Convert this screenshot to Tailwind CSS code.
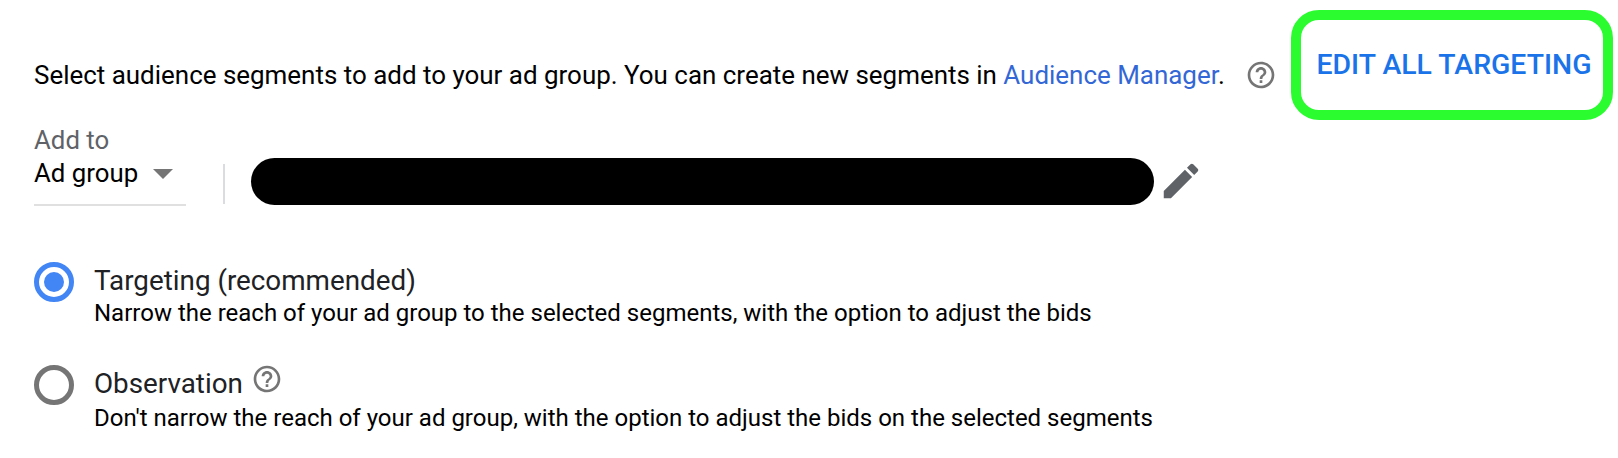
<!DOCTYPE html>
<html lang="en">
<head>
  <meta charset="UTF-8" />
  <title>Audience segments</title>
  <script src="https://cdn.jsdelivr.net/npm/@tailwindcss/browser@4"></script>
</head>
<body class="bg-white w-[1618px] h-[458px] overflow-hidden font-['Roboto',sans-serif] text-[#202124]">
  <div class="pl-[34px] pr-[5px] pt-[10px]">
    <!-- top row -->
    <div class="flex items-start justify-between">
      <div class="flex items-center pt-[20px] h-[110px]">
        <p class="text-[25.95px] leading-[34px] text-black whitespace-nowrap">Select audience segments to add to your ad group. You can create new segments in <a class="text-[#3367d6]">Audience Manager</a>.</p>
        <svg class="ml-[20px] w-[32px] h-[32px] fill-[#757575]" viewBox="0 0 24 24"><path d="M11 18h2v-2h-2v2zm1-16C6.48 2 2 6.48 2 12s4.48 10 10 10 10-4.48 10-10S17.52 2 12 2zm0 18c-4.41 0-8-3.59-8-8s3.59-8 8-8 8 3.59 8 8-3.59 8-8 8zm0-14c-2.21 0-4 1.79-4 4h2c0-1.1.9-2 2-2s2 .9 2 2c0 2-3 1.75-3 5h2c0-2.25 3-2.5 3-5 0-2.21-1.79-4-4-4z"/></svg>
      </div>
      <button class="w-[322px] h-[110px] border-[10px] border-[#2bfc30] rounded-[28px] text-[28.4px] font-medium text-[#1a73e8] pl-[4px] whitespace-nowrap">EDIT ALL TARGETING</button>
    </div>

    <!-- add to row -->
    <div class="flex items-end mt-[4px]">
      <div class="w-[152px] border-b-2 border-[#e0e0e0] h-[82px]">
        <div class="text-[25.8px] leading-[32px] text-[#5f6368]">Add to</div>
        <div class="flex items-center text-[25.8px] leading-[34px] text-black">
          Ad group
          <span class="ml-[15px] mt-[2px] w-0 h-0 border-x-[10px] border-x-transparent border-t-[10px] border-t-[#757575]"></span>
        </div>
      </div>
      <div class="ml-[37px] w-[2px] h-[40px] mb-[2px] bg-[#dadce0]"></div>
      <div class="ml-[26px] w-[903px] h-[47px] mb-[1px] rounded-full bg-black"></div>
      <svg class="ml-[4px] mb-[2px] w-[46px] h-[46px] fill-[#5f6368]" viewBox="0 0 24 24"><path d="M3 17.25V21h3.75L17.81 9.94l-3.75-3.75L3 17.25zM20.71 7.04a1 1 0 0 0 0-1.41l-2.34-2.34a1 1 0 0 0-1.41 0l-1.83 1.83 3.75 3.75 1.83-1.83z"/></svg>
    </div>

    <!-- options -->
    <div class="flex items-start mt-[56px]">
      <span class="w-[40px] h-[40px] rounded-full border-[5px] border-[#4285f4] flex items-center justify-center">
        <span class="w-[20px] h-[20px] rounded-full bg-[#4285f4]"></span>
      </span>
      <div class="ml-[20px] mt-[2px]">
        <div class="text-[27.8px] leading-[34px]">Targeting (recommended)</div>
        <div class="text-[24px] leading-[30px] text-black">Narrow the reach of your ad group to the selected segments, with the option to adjust the bids</div>
      </div>
    </div>
    <div class="flex items-start mt-[37px]">
      <span class="w-[40px] h-[40px] rounded-full border-[5px] border-[#757575]"></span>
      <div class="ml-[20px] mt-[1px]">
        <div class="flex items-start text-[27.8px] leading-[36px]">
          Observation
          <svg class="ml-[8px] mt-[-3px] w-[32px] h-[32px] fill-[#757575]" viewBox="0 0 24 24"><path d="M11 18h2v-2h-2v2zm1-16C6.48 2 2 6.48 2 12s4.48 10 10 10 10-4.48 10-10S17.52 2 12 2zm0 18c-4.41 0-8-3.59-8-8s3.59-8 8-8 8 3.59 8 8-3.59 8-8 8zm0-14c-2.21 0-4 1.79-4 4h2c0-1.1.9-2 2-2s2 .9 2 2c0 2-3 1.75-3 5h2c0-2.25 3-2.5 3-5 0-2.21-1.79-4-4-4z"/></svg>
        </div>
        <div class="text-[24px] leading-[30px] text-black mt-[1px]">Don't narrow the reach of your ad group, with the option to adjust the bids on the selected segments</div>
      </div>
    </div>
  </div>
</body>
</html>
